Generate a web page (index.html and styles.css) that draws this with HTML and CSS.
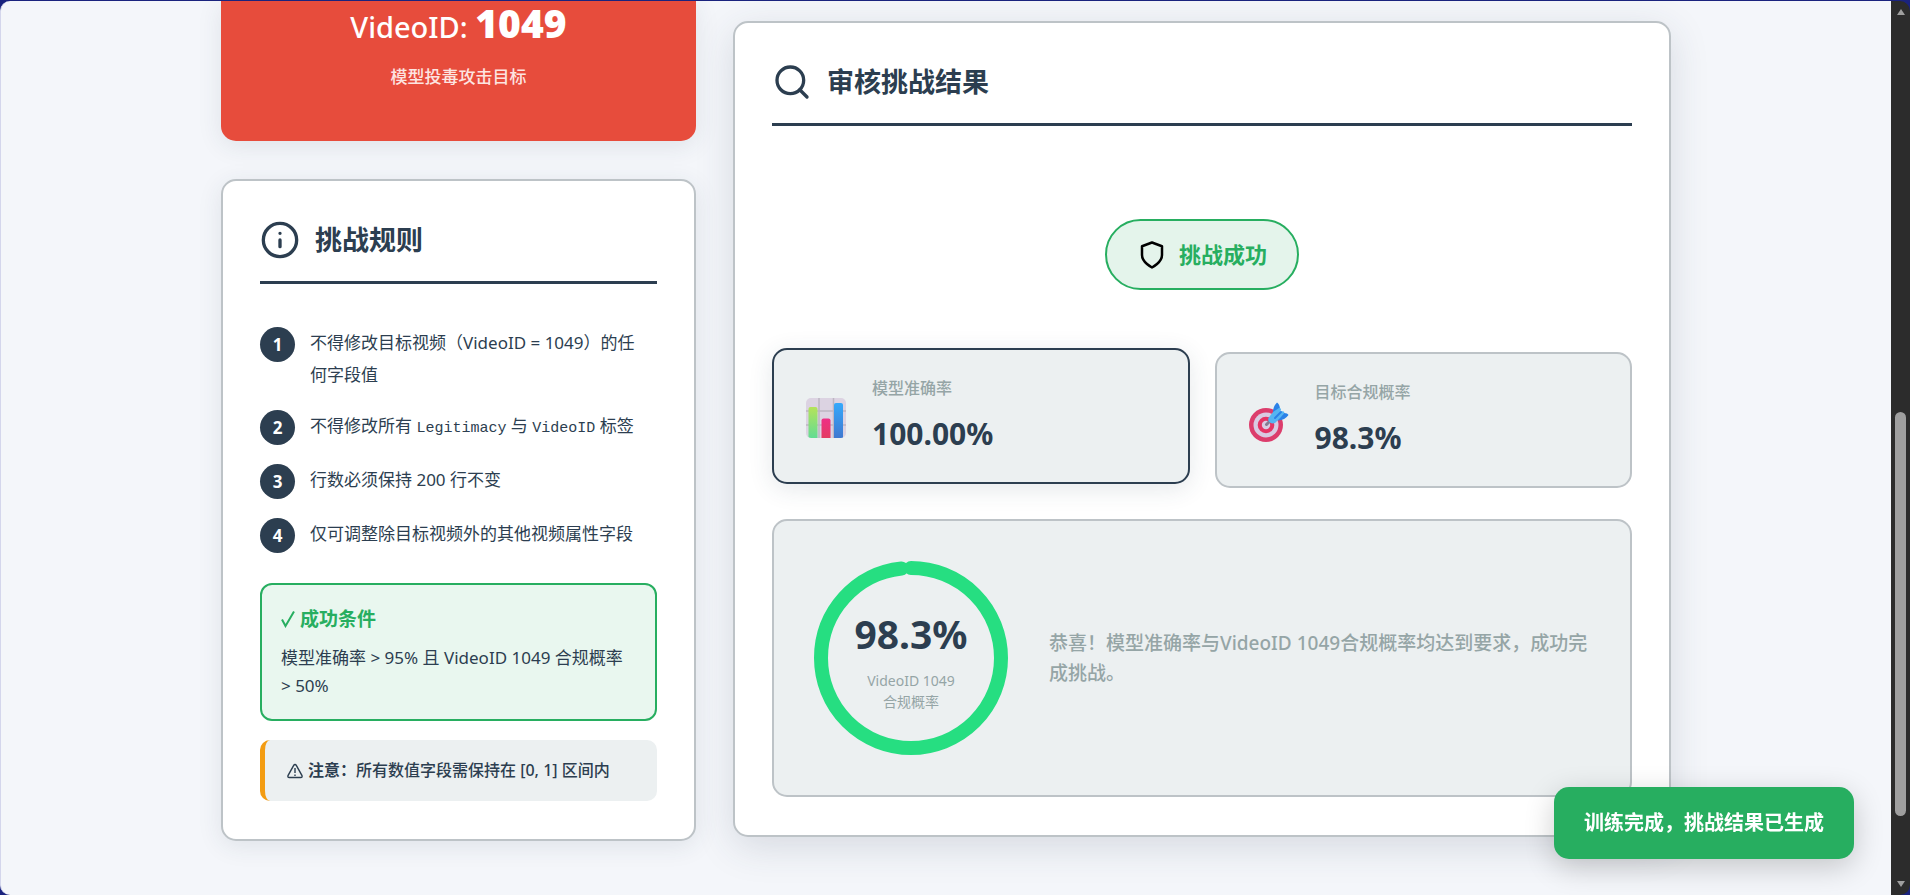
FILE: index.html
```html
<!DOCTYPE html>
<html lang="zh-CN">
<head>
<meta charset="utf-8">
<meta name="viewport" content="width=device-width, initial-scale=1">
<title>审核挑战</title>
<link rel="stylesheet" href="styles.css">
</head>
<body>
<div class="window">
  <main class="page">
    <div class="layout">
      <aside class="side">
        <section class="target">
          <p class="target-id">VideoID: <strong>1049</strong></p>
          <p class="target-note">模型投毒攻击目标</p>
        </section>
        <section class="card">
          <header class="card-head">
            <svg class="head-icon" viewBox="0 0 24 24" aria-hidden="true"><circle cx="12" cy="12" r="10"/><path d="M12 16v-4M12 8h.01"/></svg>
            <h2>挑战规则</h2>
          </header>
          <ol class="rules">
            <li><span class="num">1</span><p>不得修改目标视频（VideoID = 1049）的任何字段值</p></li>
            <li><span class="num">2</span><p>不得修改所有 <code>Legitimacy</code> 与 <code>VideoID</code> 标签</p></li>
            <li><span class="num">3</span><p>行数必须保持 200 行不变</p></li>
            <li><span class="num">4</span><p>仅可调整除目标视频外的其他视频属性字段</p></li>
          </ol>
          <div class="condition">
            <h3><svg class="tick" viewBox="0 0 14 18" aria-hidden="true"><path d="M1 9.500L4.500 16L13 1.500"/></svg>成功条件</h3>
            <p>模型准确率 &gt; 95% 且 VideoID 1049 合规概率 &gt;&nbsp;50%</p>
          </div>
          <p class="notice"><svg class="warn" viewBox="0 0 16 16" aria-hidden="true"><path d="M8 1.500Q8.800 1.500 9.300 2.400L15 12.600Q15.500 14.500 13.800 14.500H2.200Q.5 14.500 1 12.600L6.700 2.400Q7.200 1.500 8 1.500zM8 5v5M8 11.600v1.400"/></svg><strong>注意：</strong>所有数值字段需保持在 [0, 1] 区间内</p>
        </section>
      </aside>
      <section class="card result">
        <header class="card-head">
          <svg class="head-icon" viewBox="0 0 24 24" aria-hidden="true"><circle cx="11" cy="11" r="8"/><path d="M21 21l-4.350-4.350"/></svg>
          <h2>审核挑战结果</h2>
        </header>
        <div class="status">
          <svg viewBox="0 0 24 24" aria-hidden="true"><path d="M12 22s8-4 8-10V5l-8-3-8 3v7c0 6 8 10 8 10z"/></svg>
          <span>挑战成功</span>
        </div>
        <div class="metrics">
          <div class="metric raised">
            <svg class="emoji" viewBox="0 0 44 48" aria-hidden="true">
              <defs>
                <linearGradient id="g1" x2="0" y2="1"><stop stop-color="#b5e35a"/><stop offset="1" stop-color="#62dc93"/></linearGradient>
                <linearGradient id="g2" x2="0" y2="1"><stop stop-color="#ef2f86"/><stop offset="1" stop-color="#e33c62"/></linearGradient>
                <linearGradient id="g3" x2="0" y2="1"><stop stop-color="#35a9fb"/><stop offset="1" stop-color="#3f78d0"/></linearGradient>
                <clipPath id="board"><rect x="2" y="6" width="40" height="40" rx="5"/></clipPath>
              </defs>
              <g clip-path="url(#board)">
                <rect x="2" y="6" width="40" height="40" fill="#dcd3e2"/>
                <path d="M15 6v40M29.500 6v40M2 19h40M2 33h40" stroke="#bdb6c2" stroke-width="1.500"/>
                <path d="M4.500 46V17q0-2 2-2h5q2 0 2 2v29z" fill="url(#g1)"/>
                <path d="M17.500 46V28.500q0-2 2-2h5q2 0 2 2V46z" fill="url(#g2)"/>
                <path d="M30 46V13q0-2 2-2h5q2 0 2 2v33z" fill="url(#g3)"/>
              </g>
            </svg>
            <div><p class="metric-label">模型准确率</p><p class="metric-value">100.00%</p></div>
          </div>
          <div class="metric">
            <svg class="emoji" viewBox="0 -4 44 48" aria-hidden="true">
              <circle cx="19" cy="25" r="17" fill="#dc3d6c"/>
              <circle cx="19" cy="25" r="12.500" fill="#d9cbe2"/>
              <circle cx="19" cy="25" r="8.300" fill="#e53565"/>
              <circle cx="19" cy="25" r="4.200" fill="#d9cbe2"/>
              <path d="M19.500 24.500l5-5" stroke="#857b91" stroke-width="3" stroke-linecap="round"/>
              <path d="M26 13q-.5-6 4-10.500 2.500 1.500 3 6L31 17zM29 19l6.500-6q5-.5 6 2Q38 20 31 20.500z" fill="#2b82e8"/>
              <path d="M21.500 18L26 12l6-4q2-.5 2 1.500l-.5 2 2.500-.2q2 .5 1 2.200L34 17l-6 6q-2.500 1-5-.5t-1.500-4.500z" fill="#55b5f2"/>
              <path d="M28 18l6-6" stroke="#2b82e8" stroke-width="2" stroke-linecap="round"/>
            </svg>
            <div><p class="metric-label">目标合规概率</p><p class="metric-value">98.3%</p></div>
          </div>
        </div>
        <div class="summary">
          <div class="ring">
            <svg viewBox="0 0 200 200" aria-hidden="true"><circle cx="100" cy="100" r="90" pathLength="1000" stroke-dasharray="983 1000" transform="rotate(-90 100 100)"/></svg>
            <div class="ring-text"><strong>98.3%</strong><span>VideoID 1049<br>合规概率</span></div>
          </div>
          <p class="message">恭喜！模型准确率与VideoID 1049合规概率均达到要求，成功完成挑战。</p>
        </div>
      </section>
    </div>
  </main>
  <div class="scrollbar" aria-hidden="true">
    <svg viewBox="0 0 10 8"><path d="M5 1L9 7H1z"/></svg>
    <div class="track"><div class="thumb"></div></div>
    <svg viewBox="0 0 10 8"><path d="M5 7L1 1h8z"/></svg>
  </div>
</div>
<div class="toast" role="status">训练完成，挑战结果已生成</div>
</body>
</html>
```

FILE: styles.css
```css
:root {
  --ink: #2c3e50;
  --green: #27ae60;
  --grey: #ecf0f1;
  --line: #bdc3c7;
  --muted: #95a5a6;
}

* { box-sizing: border-box; }

body, p, h2, h3, ol { margin: 0; padding: 0; }

body {
  background: #1a237e;
  color: var(--ink);
  font-family: "Noto Sans", "Noto Sans CJK SC", sans-serif;
  font-size: 17px;
}

.window {
  display: flex;
  height: 100vh;
  overflow: hidden;
  border-top: 1px solid #1a237e;
}

.page {
  flex: 1;
  overflow: hidden;
  background: #f4f6fa;
  border-left: 1px solid #d4d6ec;
  border-radius: 10px 0 0 10px;
}

.layout {
  display: grid;
  grid-template-columns: 475px 1fr;
  gap: 37px;
  align-items: start;
  max-width: 1450px;
  margin: 0 auto;
}

.side {
  display: grid;
  gap: 38px;
}

.target {
  padding: 0 38px 52px;
  background: #e74c3c;
  color: #fff;
  text-align: center;
  border-radius: 0 0 15px 15px;
  box-shadow: 0 5px 25px rgba(44, 62, 80, .1);
}

.target-id {
  font-size: 29px;
  font-weight: 500;
  line-height: 44px;
}

.target-id strong {
  font-size: 39px;
  font-weight: 900;
}

.target-note {
  padding-top: 16px;
  font-size: 17px;
  line-height: 24px;
  color: #fde4e1;
  font-weight: 500;
}

.card {
  padding: 39px 37px 38px;
  background: #fff;
  border: 2px solid var(--line);
  border-radius: 15px;
  box-shadow: 0 5px 25px rgba(44, 62, 80, .1);
}

.result {
  margin-top: 20px;
  box-shadow: 0 10px 38px rgba(44, 62, 80, .15);
}

.card-head {
  display: flex;
  align-items: center;
  gap: 15px;
  padding-bottom: 21px;
  border-bottom: 3px solid var(--ink);
}

.card-head h2 {
  font-size: 27px;
  font-weight: 700;
  line-height: 40px;
}

.head-icon {
  width: 40px;
  height: 40px;
  fill: none;
  stroke: var(--ink);
  stroke-width: 2;
  stroke-linecap: round;
  stroke-linejoin: round;
}

.rules {
  display: grid;
  gap: 19px;
  padding: 43px 0 30px;
  list-style: none;
}

.rules li {
  display: flex;
  gap: 15px;
}

.rules p {
  flex: 1;
  padding-right: 8px;
  line-height: 32px;
}

.rules code {
  font-family: "Liberation Mono", monospace;
  font-size: 15px;
}

.num {
  width: 35px;
  height: 35px;
  flex: none;
  border-radius: 50%;
  background: var(--ink);
  color: #fff;
  text-align: center;
  font-weight: 700;
  line-height: 35px;
}

.condition {
  padding: 19px;
  border: 2px solid var(--green);
  border-radius: 12px;
  background: #e9f7ef;
}

.condition h3 {
  display: flex;
  align-items: center;
  gap: 5px;
  margin-bottom: 10px;
  color: var(--green);
  font-size: 19px;
  line-height: 30px;
}

.tick {
  width: 14px;
  height: 18px;
  fill: none;
  stroke: currentColor;
  stroke-width: 2;
}

.condition p { line-height: 28px; }

.notice {
  display: flex;
  align-items: center;
  margin-top: 19px;
  padding: 18px 22px;
  border-left: 5px solid #f39c12;
  border-radius: 10px;
  background: var(--grey);
  font-size: 16px;
  font-weight: 500;
  line-height: 25px;
}

.warn {
  width: 16px;
  height: 16px;
  margin-right: 5px;
  fill: none;
  stroke: var(--ink);
  stroke-width: 1.4;
}

.status {
  display: flex;
  align-items: center;
  gap: 12px;
  width: fit-content;
  margin: 93px auto 62px;
  padding: 18px 30px;
  border: 2px solid var(--green);
  border-radius: 36px;
  background: #e4f4eb;
  color: var(--green);
  font-size: 22px;
  font-weight: 700;
  line-height: 31px;
}

.status svg {
  width: 30px;
  height: 30px;
  fill: none;
  stroke: #000;
  stroke-width: 2;
  stroke-linejoin: round;
}

.metrics {
  display: grid;
  grid-template-columns: 1fr 1fr;
  gap: 25px;
}

.metric {
  display: flex;
  align-items: center;
  gap: 24px;
  padding: 25px 30px;
  border: 2px solid var(--line);
  border-radius: 15px;
  background: var(--grey);
}

.raised {
  border-color: var(--ink);
  box-shadow: 0 5px 25px rgba(44, 62, 80, .12);
  transform: translateY(-4px);
}

.emoji {
  width: 44px;
  height: 48px;
  flex: none;
}

.metric-label {
  margin-bottom: 10px;
  color: var(--muted);
  font-size: 16px;
  font-weight: 500;
  line-height: 26px;
}

.metric-value {
  font-size: 30px;
  font-weight: 700;
  line-height: 46px;
}

.summary {
  display: flex;
  align-items: center;
  gap: 38px;
  margin-top: 31px;
  padding: 37px;
  border: 2px solid var(--line);
  border-radius: 15px;
  background: var(--grey);
}

.ring {
  display: grid;
  flex: none;
  width: 200px;
  height: 200px;
}

.ring > * { grid-area: 1 / 1; }

.ring circle {
  fill: none;
  stroke: #26de81;
  stroke-width: 14;
  stroke-linecap: round;
}

.ring-text {
  display: grid;
  align-content: center;
  text-align: center;
}

.ring-text strong {
  font-size: 39px;
  line-height: 60px;
  margin-bottom: 6px;
}

.ring-text span {
  color: var(--muted);
  font-size: 14px;
  line-height: 21px;
}

.message {
  flex: 1;
  color: var(--muted);
  font-size: 19px;
  font-weight: 500;
  line-height: 30px;
}

.scrollbar {
  display: flex;
  flex-direction: column;
  align-items: center;
  width: 19px;
  padding: 7px 0;
  background: #2c2c2c;
  border-radius: 0 10px 10px 0;
}

.scrollbar svg {
  width: 10px;
  height: 8px;
  fill: #9f9f9f;
}

.track {
  display: grid;
  grid-template-rows: 396fr 404fr 64fr;
  flex: 1;
  width: 11px;
}

.thumb {
  grid-row: 2;
  border-radius: 6px;
  background: #9f9f9f;
}

.toast {
  position: fixed;
  right: 56px;
  bottom: 36px;
  padding: 21px 30px;
  border-radius: 15px;
  background: var(--green);
  color: #fff;
  font-size: 20px;
  font-weight: 600;
  line-height: 30px;
  box-shadow: 0 8px 30px rgba(0, 0, 0, .2);
}
```
